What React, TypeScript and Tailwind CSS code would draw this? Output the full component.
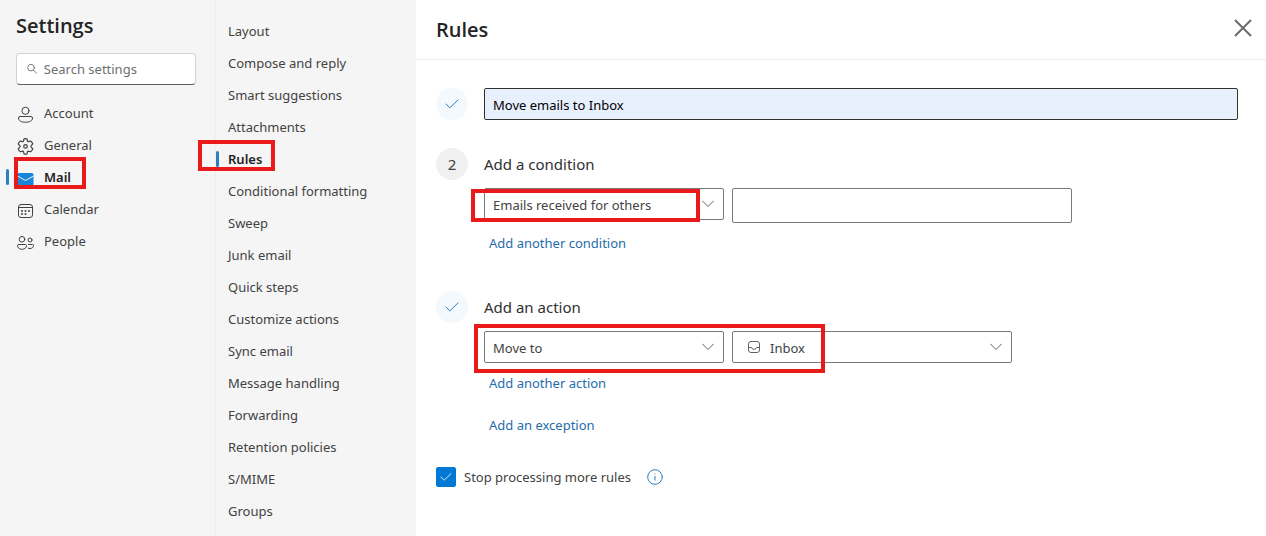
import { useState, type ReactNode } from "react";

type IconProps = { className?: string };

const stroke = { fill: "none", stroke: "currentColor", strokeLinecap: "round", strokeLinejoin: "round" } as const;

function AccountIcon() {
  return (
    <svg viewBox="0 0 20 20" className="size-5" aria-hidden="true" {...stroke}>
      <circle cx="9.5" cy="5.8" r="3.6" />
      <path d="M4 11.5h11a1.5 1.5 0 0 1 1.5 1.5c0 3-3 4.2-7 4.2S2.5 16 2.5 13A1.5 1.5 0 0 1 4 11.5Z" />
    </svg>
  );
}

function GearIcon() {
  return (
    <svg viewBox="0 0 20 20" className="size-5" aria-hidden="true" strokeWidth="1.2" {...stroke}>
      <path d="M8 1.8q1.5-.4 3 0l.4 2q.3.9 1.2.8l2-.6q1.6 1.2 2.200 2.900l-1.600 1.700q-.6.8 0 1.600l1.600 1.700q-.6 1.700-2.200 2.900l-2-.6q-.9-.1-1.200.8l-.4 2q-1.500.4-3 0l-.4-2q-.3-.9-1.200-.8l-2 .6q-1.600-1.200-2.200-2.900l1.600-1.700q.6-.8 0-1.600L2.200 6.900Q2.800 5.200 4.400 4l2 .6q.9.1 1.200-.8Z" />
      <circle cx="9.5" cy="9.4" r="1.8" />
    </svg>
  );
}

function MailIcon() {
  return (
    <svg viewBox="0 0 20 20" className="size-5" aria-hidden="true">
      <path d="M3 4h13a1.5 1.5 0 0 1 1.5 1.5V15a2 2 0 0 1-2 2h-12a2 2 0 0 1-2-2V5.5A1.5 1.5 0 0 1 3 4Z" fill="#1a86d9" />
      <path d="m1.5 7 8 4.5 8-4.5" fill="none" stroke="#f5f5f5" />
    </svg>
  );
}

function CalendarIcon() {
  return (
    <svg viewBox="0 0 20 20" className="size-5" aria-hidden="true" {...stroke}>
      <rect x="2.5" y="3.5" width="14" height="13" rx="2.5" />
      <path d="M2.5 6.5h14" />
      <g fill="currentColor" stroke="none">
        <circle cx="6" cy="10" r="1" />
        <circle cx="9.5" cy="10" r="1" />
        <circle cx="13" cy="10" r="1" />
        <circle cx="6" cy="13" r="1" />
        <circle cx="9.5" cy="13" r="1" />
      </g>
    </svg>
  );
}

function PeopleIcon() {
  return (
    <svg viewBox="0 0 20 20" className="size-5" aria-hidden="true" {...stroke}>
      <circle cx="6" cy="6.3" r="2.8" />
      <circle cx="14" cy="7" r="2" />
      <path d="M2.5 11.5h7a1 1 0 0 1 1 1c0 2.5-2 3.8-4.5 3.8s-4.500-1.300-4.500-3.800a1 1 0 0 1 1-1Z" />
      <path d="M12.5 11.5h4a1 1 0 0 1 1 1c0 2-1.5 3-3.5 3-.7 0-1.3-.1-1.8-.3" />
    </svg>
  );
}

function SearchIcon({ className }: IconProps) {
  return (
    <svg viewBox="0 0 12 12" className={className} aria-hidden="true" {...stroke}>
      <circle cx="4.5" cy="4.5" r="3.7" />
      <path d="m7.2 7.2 3.5 3.5" />
    </svg>
  );
}

function Chevron({ className }: IconProps) {
  return (
    <svg viewBox="0 0 12 8" className={className} aria-hidden="true" {...stroke}>
      <path d="m.5 1 5.5 5.5L11.5 1" />
    </svg>
  );
}

function Check({ className }: IconProps) {
  return (
    <svg viewBox="0 0 14 10" className={className} aria-hidden="true" {...stroke}>
      <path d="m1 5 3.8 3.8L13 1" />
    </svg>
  );
}

function InboxIcon({ className }: IconProps) {
  return (
    <svg viewBox="0 0 12 12" className={className} aria-hidden="true" {...stroke}>
      <rect x=".5" y=".5" width="11" height="11" rx="2.5" />
      <path d="M.5 6.5h3l1.200 1.700h2.600l1.200-1.700h3" />
    </svg>
  );
}

function InfoIcon() {
  return (
    <svg viewBox="0 0 16 16" className="size-4" aria-hidden="true" {...stroke}>
      <circle cx="8" cy="8" r="7.3" />
      <path d="M8 7.2v4M8 4.8v.1" />
    </svg>
  );
}

const sections = [
  { name: "Account", icon: <AccountIcon /> },
  { name: "General", icon: <GearIcon /> },
  { name: "Mail", icon: <MailIcon /> },
  { name: "Calendar", icon: <CalendarIcon /> },
  { name: "People", icon: <PeopleIcon /> },
];

const mailPages = [
  "Layout",
  "Compose and reply",
  "Smart suggestions",
  "Attachments",
  "Rules",
  "Conditional formatting",
  "Sweep",
  "Junk email",
  "Quick steps",
  "Customize actions",
  "Sync email",
  "Message handling",
  "Forwarding",
  "Retention policies",
  "S/MIME",
  "Groups",
];

// Red callout frame, laid over the element that it points out
function Callout({ className }: { className: string }) {
  return <span className={`pointer-events-none absolute z-10 border-4 border-[#e91a1a] ${className}`} />;
}

function Select({ label, value, className, icon }: { label: string; value: string; className: string; icon?: ReactNode }) {
  return (
    <div className={`relative h-8 ${className}`}>
      <select
        aria-label={label}
        defaultValue={value}
        className={`h-8 w-full appearance-none rounded-xs border border-[#7a7a7a] bg-white pt-0.5 pr-8 text-[#424242] ${icon ? "pl-[37px]" : "pl-2"}`}
      >
        <option>{value}</option>
      </select>
      {icon}
      <Chevron className="pointer-events-none absolute top-3 right-2.5 h-2 w-3 text-[#616161]" />
    </div>
  );
}

function Step({ done, number, children }: { done?: boolean; number: number; children: ReactNode }) {
  return (
    <li className="flex gap-4">
      <span
        className={`flex size-8 shrink-0 items-center justify-center rounded-full text-[15px] ${done ? "bg-[#f3f9fd] text-[#2b7fbf]" : "bg-[#f0f0f0] text-[#424242]"}`}
      >
        {done ? <Check className="h-2.5 w-3.5" /> : number}
      </span>
      <div className="min-w-0 flex-1">{children}</div>
    </li>
  );
}

export default function App() {
  const [ruleName, setRuleName] = useState("Move emails to Inbox");
  const [stop, setStop] = useState(true);

  return (
    <div className="flex min-h-screen bg-white font-['Noto_Sans',sans-serif] text-[13px] leading-5 text-[#424242]">
      <aside className="w-54 shrink-0 border-r border-[#ededed] bg-[#f5f5f5] px-4 pt-3">
        <h1 className="font-['Open_Sans',sans-serif] text-xl leading-7 font-semibold text-[#242424]">Settings</h1>
        <label className="mt-[13px] flex h-8 w-45 items-center rounded border border-[#d1d1d1] border-b-[#616161] bg-white pl-2.5">
          <SearchIcon className="size-3 text-[#707070]" />
          <input
            type="search"
            aria-label="Search settings"
            placeholder="Search settings"
            className="ml-1.5 w-full min-w-0 outline-none placeholder:text-[#707070]"
          />
        </label>
        <ul className="mt-3">
          {sections.map((s) => (
            <li key={s.name} className="relative">
              <a
                href="#"
                className={`flex h-8 items-center gap-2 ${s.name === "Mail" ? "font-semibold text-[#242424]" : ""}`}
              >
                <span className="mt-1">{s.icon}</span>
                {s.name}
              </a>
              {s.name === "Mail" && (
                <>
                  <span className="absolute top-2 -left-2.5 h-4 w-[3px] rounded-full bg-[#2b7fbf]" />
                  <Callout className="-top-1 -left-0.5 h-8 w-18" />
                </>
              )}
            </li>
          ))}
        </ul>
      </aside>

      <nav className="w-50 shrink-0 bg-[#f5f5f5] pt-[15px]">
        <ul>
          {mailPages.map((page) => (
            <li key={page} className="relative">
              <a
                href="#"
                className={`flex h-8 items-center pl-3 ${page === "Rules" ? "font-semibold text-[#242424]" : ""}`}
              >
                {page}
              </a>
              {page === "Rules" && (
                <>
                  <span className="absolute top-2 left-0 h-4 w-[3px] rounded-full bg-[#2b7fbf]" />
                  <Callout className="-top-[3px] -left-[18px] h-[31px] w-[77px]" />
                </>
              )}
            </li>
          ))}
        </ul>
      </nav>

      <main className="min-w-0 flex-1">
        <header className="flex h-15 items-center justify-between border-b border-[#ebebeb] pr-3.5 pl-5">
          <h2 className="font-['Open_Sans',sans-serif] text-xl font-semibold text-[#242424]">Rules</h2>
          <button type="button" aria-label="Close">
            <svg viewBox="0 0 18 18" className="mb-1 size-[18px]" fill="none" stroke="#6b6b6b" strokeWidth="2">
              <path d="m1 1 16 16M17 1 1 17" />
            </svg>
          </button>
        </header>

        <form className="pt-7 pr-7 pb-6 pl-5">
          <ol>
            <Step done number={1}>
              <input
                aria-label="Rule name"
                value={ruleName}
                onChange={(e) => setRuleName(e.target.value)}
                className="h-8 w-full rounded-xs border border-[#323130] bg-[#e8f0fe] px-2 pt-0.5 text-black outline-none"
              />
            </Step>

            <li className="h-7" aria-hidden="true" />

            <Step number={2}>
              <h3 className="text-[15px] leading-8 text-[#323130]">Add a condition</h3>
              <div className="relative mt-2 flex flex-wrap items-start gap-2">
                <Select label="Condition" value="Emails received for others" className="w-60" />
                <input aria-label="Condition value" className="h-[35px] w-85 rounded-xs border border-[#7a7a7a] px-2" />
                <Callout className="top-px -left-[13px] h-[33px] w-[229px]" />
              </div>
              <a href="#" className="mt-2.5 ml-[5px] inline-block text-[#1f6cab]">
                Add another condition
              </a>
            </Step>

            <li className="h-[38px]" aria-hidden="true" />

            <Step done number={3}>
              <h3 className="text-[15px] leading-8 text-[#323130]">Add an action</h3>
              <div className="relative mt-2 flex flex-wrap items-start gap-2">
                <Select label="Action" value="Move to" className="w-60" />
                <Select
                  label="Folder"
                  value="Inbox"
                  className="w-70"
                  icon={<InboxIcon className="pointer-events-none absolute top-2.5 left-4 size-3 text-[#616161]" />}
                />
                <Callout className="-top-[7px] -left-2.5 h-[49px] w-[351px]" />
              </div>
              <div className="mt-2.5 ml-[5px] flex flex-col items-start gap-[22px] text-[#1f6cab]">
                <a href="#">Add another action</a>
                <a href="#">Add an exception</a>
              </div>
            </Step>
          </ol>

          <div className="mt-8 flex items-center">
            <label className="relative flex items-center gap-2">
              <input
                type="checkbox"
                checked={stop}
                onChange={(e) => setStop(e.target.checked)}
                className="size-5 appearance-none rounded-xs border border-[#0078d4] checked:bg-[#0078d4]"
              />
              {stop && <Check className="pointer-events-none absolute left-1 h-2.5 w-3 text-white" />}
              Stop processing more rules
            </label>
            <button type="button" aria-label="More information" className="ml-4 text-[#2b7fbf]">
              <InfoIcon />
            </button>
          </div>
        </form>
      </main>
    </div>
  );
}
